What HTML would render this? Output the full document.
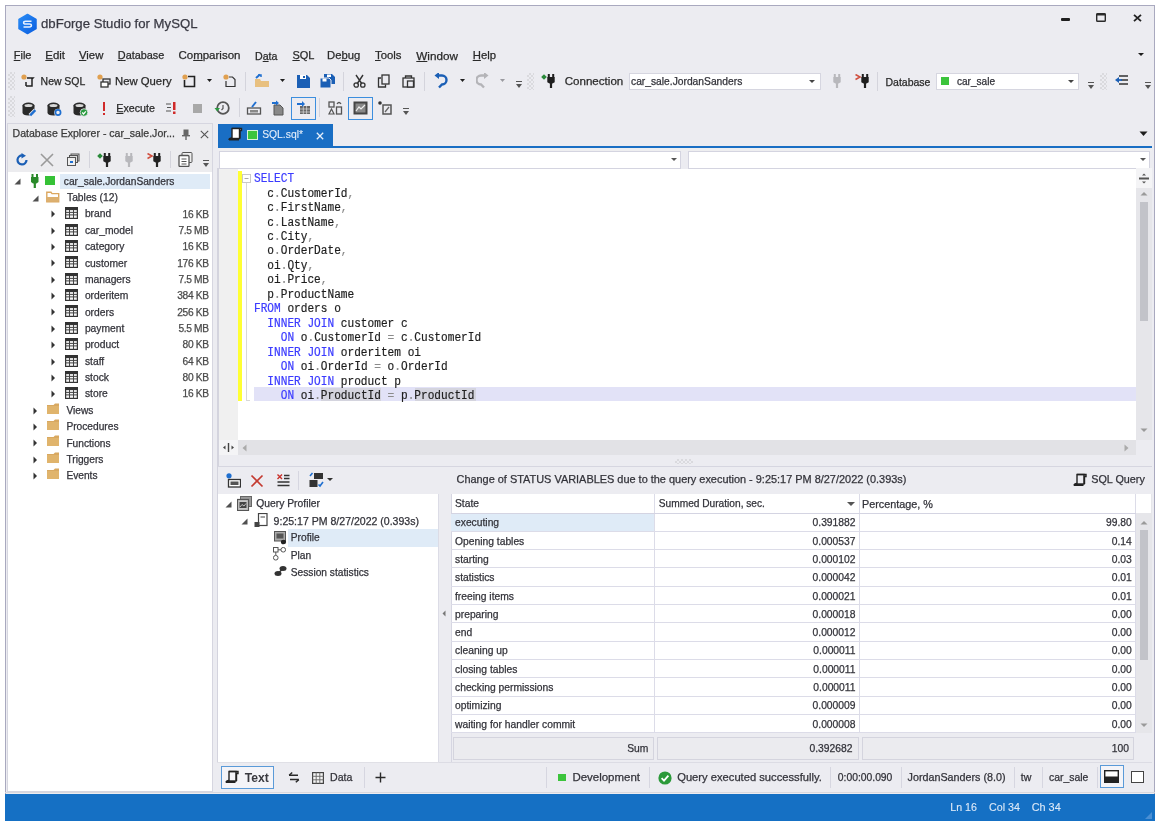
<!DOCTYPE html><html><head><meta charset="utf-8"><style>
html,body{margin:0;padding:0;}
body{width:1160px;height:828px;position:relative;overflow:hidden;background:#fff;filter:blur(0.3px);font-family:"Liberation Sans", sans-serif;}
.a{position:absolute;}
.t{white-space:nowrap;-webkit-text-stroke:0.25px currentColor;}
.ns{-webkit-text-stroke:0;}
.grip{background:repeating-conic-gradient(#dadade 0 25%, transparent 0 50%) 0 0/4px 4px;}
.m{font-family:"Liberation Mono", monospace;font-size:12px;line-height:14.45px;white-space:pre;color:#1e1e1e;-webkit-text-stroke:0.2px currentColor;transform:scaleX(0.9275);transform-origin:0 0;}
.kw{color:#3b3bff;}
.pu{color:#8c8c8c;}
u{text-decoration:underline;text-underline-offset:1px;}
</style></head><body>
<div class="a" style="left:5px;top:5px;width:1150px;height:816px;background:#ececf1;"></div>
<div class="a" style="left:5px;top:5px;width:1150px;height:1px;background:#a9a9bf;"></div>
<div class="a" style="left:5px;top:5px;width:1px;height:816px;background:#a9a9bf;"></div>
<div class="a" style="left:1154px;top:5px;width:1px;height:816px;background:#a9a9bf;"></div>
<svg class="a" style="left:17px;top:13px" width="21" height="22" viewBox="0 0 21 22"><defs><linearGradient id="lg" x1="0" y1="0" x2="1" y2="1"><stop offset="0" stop-color="#2a8cf5"/><stop offset="1" stop-color="#0a5ee0"/></linearGradient></defs><path d="M10.5 1.5L19 6.3V15.7L10.5 20.5L2 15.7V6.3Z" fill="url(#lg)" stroke="url(#lg)" stroke-width="1.5" stroke-linejoin="round"/><path d="M14.5 8.2H8.6Q6.6 8.2 6.6 9.7Q6.6 11.1 8.6 11.1H12.4Q14.4 11.1 14.4 12.6Q14.4 14 12.4 14H6.5" stroke="#e8f2ff" stroke-width="1.5" fill="none"/></svg>
<div class="a t" style="top:17.01px;font-size:13.16px;line-height:13.16px;color:#3a3a44;left:41.0px;">dbForge Studio for MySQL</div>
<div class="a" style="left:1061px;top:18px;width:9px;height:3px;background:#1e1e1e;border-radius:1px"></div>
<svg class="a" style="left:1095.5px;top:13px" width="10" height="9" viewBox="0 0 10 9"><rect x="0.7" y="0.7" width="8.6" height="7.6" rx="0.8" fill="none" stroke="#2a2a2a" stroke-width="1.4"/><rect x="0.5" y="0.5" width="9" height="2" fill="#2a2a2a"/></svg>
<svg class="a" style="left:1132.5px;top:13.5px" width="9" height="8" viewBox="0 0 9 8"><path d="M1 0.8L8 7.2M8 0.8L1 7.2" stroke="#222" stroke-width="1.8"/></svg>
<div class="a t" style="top:50.30px;font-size:11.06px;line-height:11.06px;color:#2a2a2a;left:13.7px;"><u>F</u>ile</div>
<div class="a t" style="top:50.13px;font-size:11.42px;line-height:11.42px;color:#2a2a2a;left:45.3px;"><u>E</u>dit</div>
<div class="a t" style="top:50.19px;font-size:11.3px;line-height:11.3px;color:#2a2a2a;left:79.0px;"><u>V</u>iew</div>
<div class="a t" style="top:50.40px;font-size:10.86px;line-height:10.86px;color:#2a2a2a;left:117.8px;"><u>D</u>atabase</div>
<div class="a t" style="top:50.09px;font-size:11.52px;line-height:11.52px;color:#2a2a2a;left:178.4px;">Co<u>m</u>parison</div>
<div class="a t" style="top:50.50px;font-size:10.64px;line-height:10.64px;color:#2a2a2a;left:255.0px;">D<u>a</u>ta</div>
<div class="a t" style="top:50.33px;font-size:11px;line-height:11px;color:#2a2a2a;left:292.4px;"><u>S</u>QL</div>
<div class="a t" style="top:50.20px;font-size:11.27px;line-height:11.27px;color:#2a2a2a;left:327.0px;">De<u>b</u>ug</div>
<div class="a t" style="top:50.17px;font-size:11.35px;line-height:11.35px;color:#2a2a2a;left:375.0px;"><u>T</u>ools</div>
<div class="a t" style="top:50.00px;font-size:11.71px;line-height:11.71px;color:#2a2a2a;left:416.3px;"><u>W</u>indow</div>
<div class="a t" style="top:50.17px;font-size:11.34px;line-height:11.34px;color:#2a2a2a;left:472.7px;"><u>H</u>elp</div>
<svg class="a" style="left:1138px;top:53px" width="6" height="4" viewBox="0 0 6 4"><path d="M0 0H6L3 3Z" fill="#1e1e1e"/></svg>
<div class="a grip" style="left:8px;top:72px;width:7px;height:18px"></div>
<svg class="a" style="left:21px;top:74px" width="15" height="14" viewBox="0 0 15 14"><circle cx="3" cy="3" r="2.6" fill="#e0a050"/><path d="M6 4H12L11 5V12H5" stroke="#222" stroke-width="1.5" fill="none"/><path d="M5 8V12" stroke="#222" stroke-width="1.5"/></svg>
<div class="a t" style="top:76.59px;font-size:10.44px;line-height:10.44px;color:#2a2a2a;left:40.6px;">New SQL</div>
<svg class="a" style="left:97px;top:74px" width="15" height="14" viewBox="0 0 15 14"><circle cx="3" cy="3" r="2.6" fill="#e0a050"/><rect x="6" y="5" width="7" height="5" fill="none" stroke="#333" stroke-width="1.3"/><rect x="4" y="8" width="7" height="5" fill="#fff" stroke="#333" stroke-width="1.3"/></svg>
<div class="a t" style="top:76.18px;font-size:11.32px;line-height:11.32px;color:#2a2a2a;left:115.0px;">New Query</div>
<svg class="a" style="left:182px;top:74px" width="14" height="14" viewBox="0 0 14 14"><circle cx="3" cy="3" r="2.6" fill="#e0a050"/><path d="M6 2.5H12.5V12.5H2.5V6" stroke="#222" stroke-width="1.6" fill="none"/></svg>
<svg class="a" style="left:206.5px;top:79px" width="5.0" height="4" viewBox="0 0 5.0 4"><path d="M0 0H5.0L2.5 3Z" fill="#1e1e1e"/></svg>
<svg class="a" style="left:223px;top:74px" width="13" height="14" viewBox="0 0 13 14"><circle cx="3" cy="3" r="2.6" fill="#e0a050"/><path d="M6 3H9.5L12 5.5V12.5H3V7" stroke="#333" stroke-width="1.2" fill="none"/></svg>
<div class="a" style="left:245px;top:72px;width:1px;height:19px;background:#d4d4dc;"></div>
<svg class="a" style="left:254px;top:73px" width="16" height="15" viewBox="0 0 16 15"><path d="M1 6H6L7 8H15V14H1Z" fill="#e8c080"/><path d="M2 5L6 1.5" stroke="#1f6fd0" stroke-width="2"/><path d="M4 2H7V4" stroke="#1f6fd0" stroke-width="1.5" fill="none"/></svg>
<svg class="a" style="left:280.0px;top:79px" width="5.0" height="4" viewBox="0 0 5.0 4"><path d="M0 0H5.0L2.5 3Z" fill="#1e1e1e"/></svg>
<svg class="a" style="left:297px;top:75px" width="13" height="13" viewBox="0 0 13 13"><path d="M0 0H10L13 3V13H0Z" fill="#1b5fb5"/><rect x="3" y="0" width="6" height="4" fill="#fff"/><rect x="6" y="1" width="2" height="2" fill="#1b5fb5"/></svg>
<svg class="a" style="left:320px;top:74px" width="15" height="14" viewBox="0 0 15 14"><path d="M4 0H12L15 3V10H4Z" fill="#1b5fb5"/><path d="M0 4H9L11 6V14H0Z" fill="#1b5fb5" stroke="#ececf1" stroke-width="1"/><rect x="2.5" y="4.5" width="4" height="3" fill="#fff"/><rect x="7" y="0.5" width="4" height="2.5" fill="#fff"/></svg>
<div class="a" style="left:343px;top:72px;width:1px;height:19px;background:#d4d4dc;"></div>
<svg class="a" style="left:353px;top:74px" width="13" height="14" viewBox="0 0 13 14"><path d="M3 1L9 10M10 1L4 10" stroke="#333" stroke-width="1.4"/><circle cx="3.2" cy="11" r="2.2" fill="none" stroke="#333" stroke-width="1.3"/><circle cx="9.8" cy="11" r="2.2" fill="none" stroke="#333" stroke-width="1.3"/></svg>
<svg class="a" style="left:377px;top:74px" width="14" height="14" viewBox="0 0 14 14"><rect x="5" y="1" width="7" height="9" fill="none" stroke="#333" stroke-width="1.3"/><path d="M4 4H1.5V13H8.5V10.5" fill="none" stroke="#333" stroke-width="1.3"/></svg>
<svg class="a" style="left:402px;top:74px" width="13" height="14" viewBox="0 0 13 14"><path d="M3.5 4V2H9.5V4" fill="none" stroke="#333" stroke-width="1.3"/><rect x="1" y="4" width="11" height="9" fill="none" stroke="#333" stroke-width="1.3"/><rect x="5.5" y="7" width="6" height="6" fill="#ececf1" stroke="#333" stroke-width="1.3"/></svg>
<div class="a" style="left:424px;top:72px;width:1px;height:19px;background:#d4d4dc;"></div>
<svg class="a" style="left:434px;top:73px" width="14" height="16" viewBox="0 0 14 16"><path d="M4 2.5H8A4.5 4.5 0 0 1 8 11.5L5 14.5" stroke="#1b5fb5" stroke-width="2.4" fill="none"/><path d="M0.5 2.5L5 -1V6Z" fill="#1b5fb5"/></svg>
<svg class="a" style="left:459.5px;top:79px" width="5.0" height="4" viewBox="0 0 5.0 4"><path d="M0 0H5.0L2.5 3Z" fill="#1e1e1e"/></svg>
<svg class="a" style="left:476px;top:73px" width="13" height="16" viewBox="0 0 13 16"><path d="M9 2.5H5A4.5 4.5 0 0 0 5 11.5L8 14.5" stroke="#b4b4b8" stroke-width="2.4" fill="none"/><path d="M12.5 2.5L8 -1V6Z" fill="#b4b4b8"/></svg>
<svg class="a" style="left:499.5px;top:79px" width="5.0" height="4" viewBox="0 0 5.0 4"><path d="M0 0H5.0L2.5 3Z" fill="#9a9aa0"/></svg>
<svg class="a" style="left:515px;top:79.5px" width="8" height="10" viewBox="0 0 8 10"><rect x="1" y="1" width="6" height="1" fill="#555"/><path d="M1 4H7L4 8Z" fill="#555"/></svg>
<div class="a grip" style="left:527px;top:73px;width:7px;height:17px"></div>
<svg class="a" style="left:541px;top:74px" width="14" height="15" viewBox="0 0 14 15"><rect x="6.8" y="0" width="2" height="3.5" fill="#1e1e1e"/><rect x="11.2" y="0" width="2" height="3.5" fill="#1e1e1e"/><path d="M6.3 3H13.7V8.2L11.5 9.5H8.5L6.3 8.2Z" fill="#1e1e1e"/><rect x="8.9" y="9" width="2.2" height="5" fill="#1e1e1e"/><path d="M3 0.2L5.8 3L3 5.8L0.2 3Z" fill="#2a8a3a"/></svg>
<div class="a t" style="top:76.06px;font-size:11.58px;line-height:11.58px;color:#2a2a2a;left:564.7px;">Connection</div>
<div class="a" style="left:629px;top:73px;width:192px;height:17px;background:#fff;box-sizing:border-box;border:1px solid #d6d6e0;"></div>
<div class="a t" style="top:76.67px;font-size:10.27px;line-height:10.27px;color:#33333a;left:631.0px;">car_sale.JordanSanders</div>
<svg class="a" style="left:809px;top:79.5px" width="6" height="4" viewBox="0 0 6 4"><path d="M0 0H6L3 3Z" fill="#444"/></svg>
<svg class="a" style="left:827px;top:74px" width="14" height="15" viewBox="0 0 14 15"><rect x="6.8" y="0" width="2" height="3.5" fill="#b8b8bc"/><rect x="11.2" y="0" width="2" height="3.5" fill="#b8b8bc"/><path d="M6.3 3H13.7V8.2L11.5 9.5H8.5L6.3 8.2Z" fill="#b8b8bc"/><rect x="8.9" y="9" width="2.2" height="5" fill="#b8b8bc"/></svg>
<svg class="a" style="left:855px;top:74px" width="14" height="15" viewBox="0 0 14 15"><rect x="6.8" y="0" width="2" height="3.5" fill="#1e1e1e"/><rect x="11.2" y="0" width="2" height="3.5" fill="#1e1e1e"/><path d="M6.3 3H13.7V8.2L11.5 9.5H8.5L6.3 8.2Z" fill="#1e1e1e"/><rect x="8.9" y="9" width="2.2" height="5" fill="#1e1e1e"/><path d="M0.5 0.5L5 3L0.5 5.5" stroke="#d05040" stroke-width="1.6" fill="none"/></svg>
<div class="a" style="left:877px;top:72px;width:1px;height:19px;background:#d4d4dc;"></div>
<div class="a t" style="top:76.56px;font-size:10.51px;line-height:10.51px;color:#2a2a2a;left:885.5px;">Database</div>
<div class="a" style="left:936px;top:73px;width:143px;height:17px;background:#fff;box-sizing:border-box;border:1px solid #d6d6e0;"></div>
<div class="a" style="left:941px;top:77px;width:8px;height:8px;background:#3cc43c;"></div>
<div class="a t" style="top:76.78px;font-size:10.05px;line-height:10.05px;color:#33333a;left:957.0px;">car_sale</div>
<svg class="a" style="left:1068px;top:79.5px" width="6" height="4" viewBox="0 0 6 4"><path d="M0 0H6L3 3Z" fill="#444"/></svg>
<svg class="a" style="left:1087px;top:80.5px" width="8" height="10" viewBox="0 0 8 10"><rect x="1" y="1" width="6" height="1" fill="#555"/><path d="M1 4H7L4 8Z" fill="#555"/></svg>
<div class="a grip" style="left:1100px;top:73px;width:7px;height:17px"></div>
<svg class="a" style="left:1114px;top:74px" width="15" height="14" viewBox="0 0 15 14"><path d="M5 2H14M7 6H14M5 10H14" stroke="#333" stroke-width="1.4"/><path d="M1 6L5 3V9Z" fill="#1b5fb5"/><path d="M4 6H8" stroke="#1b5fb5" stroke-width="1.8"/></svg>
<svg class="a" style="left:1143.5px;top:80.5px" width="8" height="10" viewBox="0 0 8 10"><rect x="1" y="1" width="6" height="1" fill="#555"/><path d="M1 4H7L4 8Z" fill="#555"/></svg>
<div class="a grip" style="left:8px;top:96px;width:7px;height:21px"></div>
<svg class="a" style="left:22px;top:101.5px" width="15" height="15" viewBox="0 0 15 15"><path d="M0.5 3.5V10.5Q0.5 13.5 6.5 13.5Q12.5 13.5 12.5 10.5V3.5Z" fill="#2a2a2a"/><ellipse cx="6.5" cy="3.5" rx="6" ry="3" fill="#2a2a2a"/><ellipse cx="6.5" cy="3.6" rx="4" ry="1.5" fill="#d8d8d8"/><path d="M8 13.5L13.5 8" stroke="#ececf1" stroke-width="4"/><path d="M8.2 13.3L13.3 8.2" stroke="#1f6fd0" stroke-width="2.4"/></svg>
<svg class="a" style="left:47px;top:101.5px" width="15" height="15" viewBox="0 0 15 15"><path d="M0.5 3.5V10.5Q0.5 13.5 6.5 13.5Q12.5 13.5 12.5 10.5V3.5Z" fill="#2a2a2a"/><ellipse cx="6.5" cy="3.5" rx="6" ry="3" fill="#2a2a2a"/><ellipse cx="6.5" cy="3.6" rx="4" ry="1.5" fill="#d8d8d8"/><circle cx="11" cy="10.5" r="3.8" fill="#ececf1"/><circle cx="11" cy="10.5" r="2.6" fill="none" stroke="#1f6fd0" stroke-width="1.7"/></svg>
<svg class="a" style="left:72.5px;top:101.5px" width="15" height="15" viewBox="0 0 15 15"><path d="M0.5 3.5V10.5Q0.5 13.5 6.5 13.5Q12.5 13.5 12.5 10.5V3.5Z" fill="#2a2a2a"/><ellipse cx="6.5" cy="3.5" rx="6" ry="3" fill="#2a2a2a"/><ellipse cx="6.5" cy="3.6" rx="4" ry="1.5" fill="#d8d8d8"/><circle cx="11" cy="10.5" r="3.8" fill="#2a9a40" stroke="#ececf1" stroke-width="0.8"/><path d="M9.2 10.5L10.6 12L12.8 9.3" stroke="#fff" stroke-width="1.2" fill="none"/></svg>
<div class="a" style="left:102.5px;top:102px;width:2.5px;height:9px;background:#d02a2a;"></div>
<div class="a" style="left:102.5px;top:112.5px;width:2.5px;height:2.5px;background:#d02a2a;"></div>
<div class="a t" style="top:103.47px;font-size:10.71px;line-height:10.71px;color:#2a2a2a;left:116.3px;"><u>E</u>xecute</div>
<svg class="a" style="left:166px;top:101px" width="11" height="14" viewBox="0 0 11 14"><path d="M0 3H5M1 6.5H5M0 10H5" stroke="#555" stroke-width="1.2"/><rect x="7" y="1" width="2.5" height="8" fill="#d02a2a"/><rect x="7" y="10.5" width="2.5" height="2.5" fill="#d02a2a"/></svg>
<div class="a" style="left:193px;top:104px;width:9px;height:9px;background:#a8a8a8;"></div>
<svg class="a" style="left:214px;top:100px" width="16" height="16" viewBox="0 0 16 16"><circle cx="9" cy="8" r="5.8" fill="none" stroke="#555" stroke-width="1.8"/><path d="M0.5 8H6L3.2 11.5Z" fill="#2a9a40"/><path d="M9 5V8.5L7.5 10" stroke="#555" stroke-width="1.2" fill="none"/></svg>
<div class="a" style="left:239px;top:98px;width:1px;height:19px;background:#d4d4dc;"></div>
<svg class="a" style="left:246px;top:100px" width="16" height="16" viewBox="0 0 16 16"><rect x="1.5" y="8" width="13" height="6" fill="none" stroke="#555" stroke-width="1.3"/><rect x="4" y="10" width="8" height="2.5" fill="#888"/><path d="M6 7L10 2" stroke="#1f6fd0" stroke-width="2"/></svg>
<svg class="a" style="left:271px;top:100px" width="15" height="16" viewBox="0 0 15 16"><path d="M3 5H9L12 8V15H3Z" fill="#888" stroke="#555"/><path d="M1 3H6" stroke="#1f6fd0" stroke-width="2"/><path d="M5 0.5L8 3L5 5.5Z" fill="#1f6fd0"/></svg>
<div class="a" style="left:291px;top:97px;width:25px;height:23px;box-sizing:border-box;border:1px solid #3c8ede;"></div>
<svg class="a" style="left:296px;top:100px" width="16" height="16" viewBox="0 0 16 16"><rect x="4" y="6" width="10" height="8" fill="#666"/><path d="M4 9H14M4 12H14M7.3 6V14M10.6 6V14" stroke="#ddd" stroke-width="0.7"/><path d="M1 4H7" stroke="#1f6fd0" stroke-width="2"/><path d="M6 1L9 4L6 7Z" fill="#1f6fd0"/></svg>
<div class="a" style="left:319px;top:98px;width:1px;height:19px;background:#d4d4dc;"></div>
<svg class="a" style="left:328px;top:100px" width="15" height="16" viewBox="0 0 15 16"><rect x="1" y="2" width="5" height="5" fill="none" stroke="#555" stroke-width="1.3"/><path d="M3.5 9L1 14H6Z" fill="none" stroke="#555" stroke-width="1.2"/><rect x="8.5" y="7" width="5" height="7" fill="none" stroke="#555" stroke-width="1.3"/><path d="M9 4Q11 1 13 4" stroke="#555" stroke-width="1.3" fill="none"/></svg>
<div class="a" style="left:348px;top:97px;width:25px;height:23px;box-sizing:border-box;border:1px solid #3c8ede;"></div>
<svg class="a" style="left:353px;top:101px" width="15" height="14" viewBox="0 0 15 14"><rect x="0.5" y="0.5" width="14" height="13" fill="#444"/><rect x="2.5" y="2.5" width="10" height="9" fill="#888"/><path d="M3 10L6 6L8 8L12 4" stroke="#eee" stroke-width="1.2" fill="none"/></svg>
<svg class="a" style="left:377px;top:100px" width="16" height="16" viewBox="0 0 16 16"><rect x="6" y="5" width="8" height="9" fill="none" stroke="#555" stroke-width="1.5"/><path d="M8 12L12 7" stroke="#666" stroke-width="1.3"/><circle cx="3" cy="3" r="1.8" fill="#333"/></svg>
<svg class="a" style="left:402px;top:106.5px" width="8" height="10" viewBox="0 0 8 10"><rect x="1" y="1" width="6" height="1" fill="#555"/><path d="M1 4H7L4 8Z" fill="#555"/></svg>
<div class="a" style="left:7px;top:123px;width:206px;height:669px;background:#ececef;box-sizing:border-box;border:1px solid #d6d6e0;"></div>
<div class="a t" style="top:128.44px;font-size:10.56px;line-height:10.56px;color:#3a3a3a;left:12.6px;">Database Explorer - car_sale.Jor...</div>
<svg class="a" style="left:182px;top:129px" width="8" height="11" viewBox="0 0 8 11"><rect x="1.5" y="0.5" width="5" height="6" fill="#666"/><rect x="0" y="6" width="8" height="1.4" fill="#666"/><rect x="3.3" y="7" width="1.4" height="4" fill="#666"/></svg>
<svg class="a" style="left:199.5px;top:130px" width="9" height="9" viewBox="0 0 9 9"><path d="M0.8 0.8L8.2 8.2M8.2 0.8L0.8 8.2" stroke="#555" stroke-width="1.1"/></svg>
<svg class="a" style="left:16px;top:153px" width="13" height="14" viewBox="0 0 13 14"><path d="M10.5 7A4.5 4.5 0 1 1 6.5 2.5" stroke="#1b5fb5" stroke-width="2.2" fill="none"/><path d="M5.5 0L10 2.8L5.5 5.5Z" fill="#1b5fb5"/></svg>
<svg class="a" style="left:40px;top:153px" width="14" height="14" viewBox="0 0 14 14"><path d="M1 1L13 13M13 1L1 13" stroke="#9a9a9a" stroke-width="1.6"/></svg>
<svg class="a" style="left:67px;top:153px" width="13" height="13" viewBox="0 0 13 13"><rect x="4" y="1" width="8" height="7" fill="#ddd" stroke="#555"/><rect x="2.5" y="2.5" width="8" height="7" fill="#ddd" stroke="#555"/><rect x="0.5" y="4.5" width="8" height="8" fill="#eee" stroke="#555"/><rect x="3" y="8" width="3" height="2" fill="#1f6fd0"/></svg>
<div class="a" style="left:88.5px;top:151px;width:1.0px;height:17px;background:#d4d4dc;"></div>
<svg class="a" style="left:97px;top:152.5px" width="14" height="15" viewBox="0 0 14 15"><rect x="6.8" y="0" width="2" height="3.5" fill="#222"/><rect x="11.2" y="0" width="2" height="3.5" fill="#222"/><path d="M6.3 3H13.7V8.2L11.5 9.5H8.5L6.3 8.2Z" fill="#222"/><rect x="8.9" y="9" width="2.2" height="5" fill="#222"/><path d="M3 0.2L5.8 3L3 5.8L0.2 3Z" fill="#2a8a3a"/></svg>
<svg class="a" style="left:119px;top:153px" width="14" height="15" viewBox="0 0 14 15"><rect x="6.8" y="0" width="2" height="3.5" fill="#b8b8bc"/><rect x="11.2" y="0" width="2" height="3.5" fill="#b8b8bc"/><path d="M6.3 3H13.7V8.2L11.5 9.5H8.5L6.3 8.2Z" fill="#b8b8bc"/><rect x="8.9" y="9" width="2.2" height="5" fill="#b8b8bc"/></svg>
<svg class="a" style="left:147px;top:152.5px" width="14" height="15" viewBox="0 0 14 15"><rect x="6.8" y="0" width="2" height="3.5" fill="#222"/><rect x="11.2" y="0" width="2" height="3.5" fill="#222"/><path d="M6.3 3H13.7V8.2L11.5 9.5H8.5L6.3 8.2Z" fill="#222"/><rect x="8.9" y="9" width="2.2" height="5" fill="#222"/><path d="M0.5 0.5L5 3L0.5 5.5" stroke="#d05040" stroke-width="1.6" fill="none"/></svg>
<div class="a" style="left:169.5px;top:151px;width:1.0px;height:17px;background:#d4d4dc;"></div>
<svg class="a" style="left:178px;top:152px" width="15" height="15" viewBox="0 0 15 15"><rect x="4" y="0.5" width="10" height="10" rx="1" fill="#eee" stroke="#555"/><rect x="1" y="3.5" width="10" height="11" rx="1" fill="#fff" stroke="#555" stroke-width="1.3"/><path d="M3.5 7H8.5M3.5 9.5H8.5M3.5 12H8.5" stroke="#555" stroke-width="1"/></svg>
<svg class="a" style="left:202px;top:158.5px" width="8" height="10" viewBox="0 0 8 10"><rect x="1" y="1" width="6" height="1" fill="#555"/><path d="M1 4H7L4 8Z" fill="#555"/></svg>
<div class="a" style="left:8px;top:172px;width:204px;height:619px;background:#ffffff;"></div>
<div class="a" style="left:59.5px;top:173.5px;width:150.0px;height:15.0px;background:#dfebf7;"></div>
<svg class="a" style="left:13.5px;top:178px" width="7" height="7" viewBox="0 0 7 7"><path d="M6.5 0.5V6.5H0.5Z" fill="#505050"/></svg>
<svg class="a" style="left:30.5px;top:174px" width="8" height="14" viewBox="0 0 8 14"><rect x="0.5" y="0" width="2" height="3.5" fill="#2a8a2a"/><rect x="5" y="0" width="2" height="3.5" fill="#2a8a2a"/><path d="M0 3H7.5V8L5.5 9.5H2L0 8Z" fill="#2a8a2a"/><rect x="2.7" y="9" width="2.2" height="5" fill="#2a8a2a"/></svg>
<div class="a" style="left:45.2px;top:176.2px;width:9.5px;height:9.300000000000011px;background:#36c236;"></div>
<div class="a t" style="top:176.80px;font-size:10.21px;line-height:10.21px;color:#33333a;left:63.8px;">car_sale.JordanSanders</div>
<svg class="a" style="left:32px;top:194.5px" width="7" height="7" viewBox="0 0 7 7"><path d="M6.5 0.5V6.5H0.5Z" fill="#505050"/></svg>
<svg class="a" style="left:46px;top:190.5px" width="14" height="12" viewBox="0 0 14 12"><path d="M0.8 1.3H5L6 2.6H12.7V10.7H0.8Z" fill="#fff" stroke="#dca860" stroke-width="1.4"/><path d="M0.8 6H12.7V10.7H0.8Z" fill="#dcb070"/></svg>
<div class="a t" style="top:193.11px;font-size:10.31px;line-height:10.31px;color:#33333a;left:67.0px;">Tables (12)</div>
<svg class="a" style="left:50.5px;top:210.32px" width="5" height="8" viewBox="0 0 5 8"><path d="M0.5 0.5L4 4L0.5 7.5Z" fill="#333"/></svg>
<svg class="a" style="left:65px;top:207.32px" width="13" height="12" viewBox="0 0 13 12"><rect x="0.6" y="0.6" width="11.8" height="10.8" fill="#f4f4f4" stroke="#333" stroke-width="1.2"/><rect x="0.5" y="0.5" width="12" height="2.6" fill="#333"/><path d="M0.5 5.4H12.5M0.5 7.9H12.5M4.5 3V11.5M8.5 3V11.5" stroke="#444" stroke-width="1"/></svg>
<div class="a t" style="top:209.48px;font-size:10.3px;line-height:10.3px;color:#33333a;left:84.9px;">brand</div>
<div class="a t" style="top:209.53px;font-size:10.2px;line-height:10.2px;color:#4a4a4a;right:951.4px;text-align:right;letter-spacing:-0.35px;">16 KB</div>
<svg class="a" style="left:50.5px;top:226.68px" width="5" height="8" viewBox="0 0 5 8"><path d="M0.5 0.5L4 4L0.5 7.5Z" fill="#333"/></svg>
<svg class="a" style="left:65px;top:223.68px" width="13" height="12" viewBox="0 0 13 12"><rect x="0.6" y="0.6" width="11.8" height="10.8" fill="#f4f4f4" stroke="#333" stroke-width="1.2"/><rect x="0.5" y="0.5" width="12" height="2.6" fill="#333"/><path d="M0.5 5.4H12.5M0.5 7.9H12.5M4.5 3V11.5M8.5 3V11.5" stroke="#444" stroke-width="1"/></svg>
<div class="a t" style="top:225.84px;font-size:10.3px;line-height:10.3px;color:#33333a;left:84.9px;">car_model</div>
<div class="a t" style="top:225.89px;font-size:10.2px;line-height:10.2px;color:#4a4a4a;right:951.4px;text-align:right;letter-spacing:-0.35px;">7.5 MB</div>
<svg class="a" style="left:50.5px;top:243.04px" width="5" height="8" viewBox="0 0 5 8"><path d="M0.5 0.5L4 4L0.5 7.5Z" fill="#333"/></svg>
<svg class="a" style="left:65px;top:240.04px" width="13" height="12" viewBox="0 0 13 12"><rect x="0.6" y="0.6" width="11.8" height="10.8" fill="#f4f4f4" stroke="#333" stroke-width="1.2"/><rect x="0.5" y="0.5" width="12" height="2.6" fill="#333"/><path d="M0.5 5.4H12.5M0.5 7.9H12.5M4.5 3V11.5M8.5 3V11.5" stroke="#444" stroke-width="1"/></svg>
<div class="a t" style="top:242.20px;font-size:10.3px;line-height:10.3px;color:#33333a;left:84.9px;">category</div>
<div class="a t" style="top:242.25px;font-size:10.2px;line-height:10.2px;color:#4a4a4a;right:951.4px;text-align:right;letter-spacing:-0.35px;">16 KB</div>
<svg class="a" style="left:50.5px;top:259.4px" width="5" height="8" viewBox="0 0 5 8"><path d="M0.5 0.5L4 4L0.5 7.5Z" fill="#333"/></svg>
<svg class="a" style="left:65px;top:256.4px" width="13" height="12" viewBox="0 0 13 12"><rect x="0.6" y="0.6" width="11.8" height="10.8" fill="#f4f4f4" stroke="#333" stroke-width="1.2"/><rect x="0.5" y="0.5" width="12" height="2.6" fill="#333"/><path d="M0.5 5.4H12.5M0.5 7.9H12.5M4.5 3V11.5M8.5 3V11.5" stroke="#444" stroke-width="1"/></svg>
<div class="a t" style="top:258.56px;font-size:10.3px;line-height:10.3px;color:#33333a;left:84.9px;">customer</div>
<div class="a t" style="top:258.61px;font-size:10.2px;line-height:10.2px;color:#4a4a4a;right:951.4px;text-align:right;letter-spacing:-0.35px;">176 KB</div>
<svg class="a" style="left:50.5px;top:275.76px" width="5" height="8" viewBox="0 0 5 8"><path d="M0.5 0.5L4 4L0.5 7.5Z" fill="#333"/></svg>
<svg class="a" style="left:65px;top:272.76px" width="13" height="12" viewBox="0 0 13 12"><rect x="0.6" y="0.6" width="11.8" height="10.8" fill="#f4f4f4" stroke="#333" stroke-width="1.2"/><rect x="0.5" y="0.5" width="12" height="2.6" fill="#333"/><path d="M0.5 5.4H12.5M0.5 7.9H12.5M4.5 3V11.5M8.5 3V11.5" stroke="#444" stroke-width="1"/></svg>
<div class="a t" style="top:274.92px;font-size:10.3px;line-height:10.3px;color:#33333a;left:84.9px;">managers</div>
<div class="a t" style="top:274.97px;font-size:10.2px;line-height:10.2px;color:#4a4a4a;right:951.4px;text-align:right;letter-spacing:-0.35px;">7.5 MB</div>
<svg class="a" style="left:50.5px;top:292.12px" width="5" height="8" viewBox="0 0 5 8"><path d="M0.5 0.5L4 4L0.5 7.5Z" fill="#333"/></svg>
<svg class="a" style="left:65px;top:289.12px" width="13" height="12" viewBox="0 0 13 12"><rect x="0.6" y="0.6" width="11.8" height="10.8" fill="#f4f4f4" stroke="#333" stroke-width="1.2"/><rect x="0.5" y="0.5" width="12" height="2.6" fill="#333"/><path d="M0.5 5.4H12.5M0.5 7.9H12.5M4.5 3V11.5M8.5 3V11.5" stroke="#444" stroke-width="1"/></svg>
<div class="a t" style="top:291.28px;font-size:10.3px;line-height:10.3px;color:#33333a;left:84.9px;">orderitem</div>
<div class="a t" style="top:291.33px;font-size:10.2px;line-height:10.2px;color:#4a4a4a;right:951.4px;text-align:right;letter-spacing:-0.35px;">384 KB</div>
<svg class="a" style="left:50.5px;top:308.48px" width="5" height="8" viewBox="0 0 5 8"><path d="M0.5 0.5L4 4L0.5 7.5Z" fill="#333"/></svg>
<svg class="a" style="left:65px;top:305.48px" width="13" height="12" viewBox="0 0 13 12"><rect x="0.6" y="0.6" width="11.8" height="10.8" fill="#f4f4f4" stroke="#333" stroke-width="1.2"/><rect x="0.5" y="0.5" width="12" height="2.6" fill="#333"/><path d="M0.5 5.4H12.5M0.5 7.9H12.5M4.5 3V11.5M8.5 3V11.5" stroke="#444" stroke-width="1"/></svg>
<div class="a t" style="top:307.64px;font-size:10.3px;line-height:10.3px;color:#33333a;left:84.9px;">orders</div>
<div class="a t" style="top:307.69px;font-size:10.2px;line-height:10.2px;color:#4a4a4a;right:951.4px;text-align:right;letter-spacing:-0.35px;">256 KB</div>
<svg class="a" style="left:50.5px;top:324.84000000000003px" width="5" height="8" viewBox="0 0 5 8"><path d="M0.5 0.5L4 4L0.5 7.5Z" fill="#333"/></svg>
<svg class="a" style="left:65px;top:321.84000000000003px" width="13" height="12" viewBox="0 0 13 12"><rect x="0.6" y="0.6" width="11.8" height="10.8" fill="#f4f4f4" stroke="#333" stroke-width="1.2"/><rect x="0.5" y="0.5" width="12" height="2.6" fill="#333"/><path d="M0.5 5.4H12.5M0.5 7.9H12.5M4.5 3V11.5M8.5 3V11.5" stroke="#444" stroke-width="1"/></svg>
<div class="a t" style="top:324.00px;font-size:10.3px;line-height:10.3px;color:#33333a;left:84.9px;">payment</div>
<div class="a t" style="top:324.05px;font-size:10.2px;line-height:10.2px;color:#4a4a4a;right:951.4px;text-align:right;letter-spacing:-0.35px;">5.5 MB</div>
<svg class="a" style="left:50.5px;top:341.2px" width="5" height="8" viewBox="0 0 5 8"><path d="M0.5 0.5L4 4L0.5 7.5Z" fill="#333"/></svg>
<svg class="a" style="left:65px;top:338.2px" width="13" height="12" viewBox="0 0 13 12"><rect x="0.6" y="0.6" width="11.8" height="10.8" fill="#f4f4f4" stroke="#333" stroke-width="1.2"/><rect x="0.5" y="0.5" width="12" height="2.6" fill="#333"/><path d="M0.5 5.4H12.5M0.5 7.9H12.5M4.5 3V11.5M8.5 3V11.5" stroke="#444" stroke-width="1"/></svg>
<div class="a t" style="top:340.36px;font-size:10.3px;line-height:10.3px;color:#33333a;left:84.9px;">product</div>
<div class="a t" style="top:340.41px;font-size:10.2px;line-height:10.2px;color:#4a4a4a;right:951.4px;text-align:right;letter-spacing:-0.35px;">80 KB</div>
<svg class="a" style="left:50.5px;top:357.55999999999995px" width="5" height="8" viewBox="0 0 5 8"><path d="M0.5 0.5L4 4L0.5 7.5Z" fill="#333"/></svg>
<svg class="a" style="left:65px;top:354.55999999999995px" width="13" height="12" viewBox="0 0 13 12"><rect x="0.6" y="0.6" width="11.8" height="10.8" fill="#f4f4f4" stroke="#333" stroke-width="1.2"/><rect x="0.5" y="0.5" width="12" height="2.6" fill="#333"/><path d="M0.5 5.4H12.5M0.5 7.9H12.5M4.5 3V11.5M8.5 3V11.5" stroke="#444" stroke-width="1"/></svg>
<div class="a t" style="top:356.72px;font-size:10.3px;line-height:10.3px;color:#33333a;left:84.9px;">staff</div>
<div class="a t" style="top:356.77px;font-size:10.2px;line-height:10.2px;color:#4a4a4a;right:951.4px;text-align:right;letter-spacing:-0.35px;">64 KB</div>
<svg class="a" style="left:50.5px;top:373.91999999999996px" width="5" height="8" viewBox="0 0 5 8"><path d="M0.5 0.5L4 4L0.5 7.5Z" fill="#333"/></svg>
<svg class="a" style="left:65px;top:370.91999999999996px" width="13" height="12" viewBox="0 0 13 12"><rect x="0.6" y="0.6" width="11.8" height="10.8" fill="#f4f4f4" stroke="#333" stroke-width="1.2"/><rect x="0.5" y="0.5" width="12" height="2.6" fill="#333"/><path d="M0.5 5.4H12.5M0.5 7.9H12.5M4.5 3V11.5M8.5 3V11.5" stroke="#444" stroke-width="1"/></svg>
<div class="a t" style="top:373.08px;font-size:10.3px;line-height:10.3px;color:#33333a;left:84.9px;">stock</div>
<div class="a t" style="top:373.13px;font-size:10.2px;line-height:10.2px;color:#4a4a4a;right:951.4px;text-align:right;letter-spacing:-0.35px;">80 KB</div>
<svg class="a" style="left:50.5px;top:390.28px" width="5" height="8" viewBox="0 0 5 8"><path d="M0.5 0.5L4 4L0.5 7.5Z" fill="#333"/></svg>
<svg class="a" style="left:65px;top:387.28px" width="13" height="12" viewBox="0 0 13 12"><rect x="0.6" y="0.6" width="11.8" height="10.8" fill="#f4f4f4" stroke="#333" stroke-width="1.2"/><rect x="0.5" y="0.5" width="12" height="2.6" fill="#333"/><path d="M0.5 5.4H12.5M0.5 7.9H12.5M4.5 3V11.5M8.5 3V11.5" stroke="#444" stroke-width="1"/></svg>
<div class="a t" style="top:389.44px;font-size:10.3px;line-height:10.3px;color:#33333a;left:84.9px;">store</div>
<div class="a t" style="top:389.49px;font-size:10.2px;line-height:10.2px;color:#4a4a4a;right:951.4px;text-align:right;letter-spacing:-0.35px;">16 KB</div>
<svg class="a" style="left:33px;top:406.64px" width="5" height="8" viewBox="0 0 5 8"><path d="M0.5 0.5L4 4L0.5 7.5Z" fill="#333"/></svg>
<svg class="a" style="left:46.8px;top:402.64px" width="12" height="11" viewBox="0 0 12 11"><path d="M0 2H6.5L8 0.5H12V11H0Z" fill="#d8a860"/><rect x="0" y="3" width="12" height="8" fill="#e0b46c"/></svg>
<div class="a t" style="top:405.85px;font-size:10.2px;line-height:10.2px;color:#33333a;left:66.4px;">Views</div>
<svg class="a" style="left:33px;top:423.0px" width="5" height="8" viewBox="0 0 5 8"><path d="M0.5 0.5L4 4L0.5 7.5Z" fill="#333"/></svg>
<svg class="a" style="left:46.8px;top:419.0px" width="12" height="11" viewBox="0 0 12 11"><path d="M0 2H6.5L8 0.5H12V11H0Z" fill="#d8a860"/><rect x="0" y="3" width="12" height="8" fill="#e0b46c"/></svg>
<div class="a t" style="top:422.21px;font-size:10.2px;line-height:10.2px;color:#33333a;left:66.4px;">Procedures</div>
<svg class="a" style="left:33px;top:439.36px" width="5" height="8" viewBox="0 0 5 8"><path d="M0.5 0.5L4 4L0.5 7.5Z" fill="#333"/></svg>
<svg class="a" style="left:46.8px;top:435.36px" width="12" height="11" viewBox="0 0 12 11"><path d="M0 2H6.5L8 0.5H12V11H0Z" fill="#d8a860"/><rect x="0" y="3" width="12" height="8" fill="#e0b46c"/></svg>
<div class="a t" style="top:438.57px;font-size:10.2px;line-height:10.2px;color:#33333a;left:66.4px;">Functions</div>
<svg class="a" style="left:33px;top:455.72px" width="5" height="8" viewBox="0 0 5 8"><path d="M0.5 0.5L4 4L0.5 7.5Z" fill="#333"/></svg>
<svg class="a" style="left:46.8px;top:451.72px" width="12" height="11" viewBox="0 0 12 11"><path d="M0 2H6.5L8 0.5H12V11H0Z" fill="#d8a860"/><rect x="0" y="3" width="12" height="8" fill="#e0b46c"/></svg>
<div class="a t" style="top:454.93px;font-size:10.2px;line-height:10.2px;color:#33333a;left:66.4px;">Triggers</div>
<svg class="a" style="left:33px;top:472.08000000000004px" width="5" height="8" viewBox="0 0 5 8"><path d="M0.5 0.5L4 4L0.5 7.5Z" fill="#333"/></svg>
<svg class="a" style="left:46.8px;top:468.08000000000004px" width="12" height="11" viewBox="0 0 12 11"><path d="M0 2H6.5L8 0.5H12V11H0Z" fill="#d8a860"/><rect x="0" y="3" width="12" height="8" fill="#e0b46c"/></svg>
<div class="a t" style="top:471.29px;font-size:10.2px;line-height:10.2px;color:#33333a;left:66.4px;">Events</div>
<div class="a" style="left:217.5px;top:123.6px;width:115.10000000000002px;height:22.400000000000006px;background:#196ec4;"></div>
<div class="a" style="left:218px;top:146px;width:934px;height:2px;background:#196ec4;"></div>
<div class="a" style="left:218px;top:148px;width:934px;height:3px;background:#eeeef0;"></div>
<svg class="a" style="left:228px;top:127px" width="15" height="15" viewBox="0 0 15 15"><path d="M4 1.5H13.5V3.5H12V11.5" stroke="#222" stroke-width="1.4" fill="#fff"/><rect x="4" y="1.5" width="7.5" height="10" fill="#fff" stroke="#222" stroke-width="1.4"/><path d="M1 12.5H11" stroke="#222" stroke-width="2"/><path d="M4 11Q1 11 1 13" stroke="#222" stroke-width="1.4" fill="none"/></svg>
<div class="a" style="left:247px;top:130.3px;width:11px;height:10.199999999999989px;background:#3cc43c;box-sizing:border-box;border:1px solid #d8f0d8;"></div>
<div class="a t" style="top:130.14px;font-size:10.34px;line-height:10.34px;color:#e4eefa;left:262.2px;-webkit-text-stroke:0.1px #e4eefa;">SQL.sql*</div>
<svg class="a" style="left:315.5px;top:131.5px" width="8" height="8" viewBox="0 0 8 8"><path d="M0.8 0.8L7.2 7.2M7.2 0.8L0.8 7.2" stroke="#e4eefa" stroke-width="1.3"/></svg>
<svg class="a" style="left:1139px;top:131px" width="9" height="6" viewBox="0 0 9 6"><path d="M0.5 0.5H8.5L4.5 5Z" fill="#1e1e1e"/></svg>
<div class="a" style="left:218px;top:151px;width:934px;height:18px;background:#ececf1;"></div>
<div class="a" style="left:219px;top:151px;width:462px;height:18px;background:#fff;box-sizing:border-box;border:1px solid #d4d4e0;"></div>
<div class="a" style="left:688px;top:151px;width:462px;height:18px;background:#fff;box-sizing:border-box;border:1px solid #d4d4e0;"></div>
<svg class="a" style="left:671px;top:157.5px" width="6" height="4" viewBox="0 0 6 4"><path d="M0 0H6L3 3Z" fill="#555"/></svg>
<svg class="a" style="left:1140px;top:157.5px" width="6" height="4" viewBox="0 0 6 4"><path d="M0 0H6L3 3Z" fill="#555"/></svg>
<div class="a" style="left:218px;top:169px;width:934px;height:287px;background:#ffffff;"></div>
<div class="a" style="left:217px;top:168px;width:1.5px;height:594px;background:#d4d4de;"></div>
<div class="a" style="left:219px;top:169px;width:18.5px;height:270.5px;background:#f0f0f0;"></div>
<div class="a" style="left:237.5px;top:170.8px;width:4.199999999999989px;height:230.7px;background:#ffff33;"></div>
<svg class="a" style="left:242px;top:173.5px" width="9" height="9" viewBox="0 0 9 9"><rect x="0.5" y="0.5" width="8" height="8" fill="#fff" stroke="#c8c8c8"/><path d="M2.5 4.5H6.5" stroke="#aaa"/></svg>
<div class="a" style="left:245.5px;top:182.5px;width:1.0px;height:218.5px;background:#d8d8d8;"></div>
<div class="a" style="left:245.5px;top:400px;width:4.5px;height:1px;background:#d8d8d8;"></div>
<div class="a" style="left:253.8px;top:387.4px;width:882.2px;height:14.100000000000023px;background:#e2e2f7;"></div>
<div class="a" style="left:321px;top:387.6px;width:60.39999999999998px;height:13.699999999999989px;background:#d4d4de;"></div>
<div class="a" style="left:415.2px;top:387.6px;width:60.5px;height:13.699999999999989px;background:#d4d4de;"></div>
<div class="a m" style="left:254.1px;top:172.2px"><span class="kw">SELECT</span>
  c<span class="pu">.</span>CustomerId<span class="pu">,</span>
  c<span class="pu">.</span>FirstName<span class="pu">,</span>
  c<span class="pu">.</span>LastName<span class="pu">,</span>
  c<span class="pu">.</span>City<span class="pu">,</span>
  o<span class="pu">.</span>OrderDate<span class="pu">,</span>
  oi<span class="pu">.</span>Qty<span class="pu">,</span>
  oi<span class="pu">.</span>Price<span class="pu">,</span>
  p<span class="pu">.</span>ProductName
<span class="kw">FROM</span> orders o
  <span class="kw">INNER JOIN</span> customer c
    <span class="kw">ON</span> o<span class="pu">.</span>CustomerId <span class="pu">=</span> c<span class="pu">.</span>CustomerId
  <span class="kw">INNER JOIN</span> orderitem oi
    <span class="kw">ON</span> oi<span class="pu">.</span>OrderId <span class="pu">=</span> o<span class="pu">.</span>OrderId
  <span class="kw">INNER JOIN</span> product p
    <span class="kw">ON</span> oi<span class="pu">.</span>ProductId <span class="pu">=</span> p<span class="pu">.</span>ProductId</div>
<div class="a" style="left:1136px;top:168px;width:16px;height:271.5px;background:#e6e6ea;"></div>
<div class="a" style="left:1136px;top:168px;width:16px;height:20px;background:#f4f4f6;"></div>
<svg class="a" style="left:1139px;top:172px" width="10" height="13" viewBox="0 0 10 13"><path d="M3 3.5H7L5 1.5Z" fill="#555"/><rect x="0" y="5.5" width="10" height="2" fill="#555"/><path d="M3 9.5H7L5 11.5Z" fill="#555"/></svg>
<svg class="a" style="left:1140px;top:191px" width="8" height="5" viewBox="0 0 8 5"><path d="M0.5 4.5H7.5L4 1Z" fill="#9a9a9a"/></svg>
<div class="a" style="left:1139.5px;top:201.5px;width:8.200000000000045px;height:119.0px;background:#c2c3c9;"></div>
<svg class="a" style="left:1140px;top:428px" width="8" height="5" viewBox="0 0 8 5"><path d="M0.5 0.5H7.5L4 4Z" fill="#9a9a9a"/></svg>
<div class="a" style="left:219px;top:439.5px;width:917px;height:15.5px;background:#e2e2e6;"></div>
<div class="a" style="left:219px;top:439.5px;width:18.5px;height:15.5px;background:#f4f4f6;"></div>
<svg class="a" style="left:223px;top:443px" width="11" height="9" viewBox="0 0 11 9"><rect x="4.8" y="0" width="1.4" height="9" fill="#444"/><path d="M0 4.5L2.5 2.5V6.5Z" fill="#444"/><path d="M11 4.5L8.5 2.5V6.5Z" fill="#444"/></svg>
<svg class="a" style="left:242px;top:443.5px" width="5" height="8" viewBox="0 0 5 8"><path d="M4.5 0.5V7.5L0.5 4Z" fill="#aaa"/></svg>
<svg class="a" style="left:1124px;top:443.5px" width="5" height="8" viewBox="0 0 5 8"><path d="M0.5 0.5V7.5L4.5 4Z" fill="#aaa"/></svg>
<div class="a" style="left:1136px;top:439.5px;width:16px;height:15.5px;background:#ececf1;"></div>
<div class="a" style="left:219px;top:455px;width:933px;height:12px;background:#ececf1;"></div>
<div class="a grip" style="left:675px;top:459px;width:18px;height:5px"></div>
<div class="a" style="left:218px;top:466px;width:934px;height:1px;background:#d6d6e0;"></div>
<div class="a" style="left:218px;top:467px;width:934px;height:325px;background:#ececf1;"></div>
<svg class="a" style="left:226px;top:473px" width="15" height="15" viewBox="0 0 15 15"><circle cx="3" cy="2.8" r="2.6" fill="#1f6fd0"/><rect x="2.5" y="6.5" width="12" height="7.5" fill="#fff" stroke="#333" stroke-width="1.3"/><rect x="4.5" y="8.5" width="8" height="3.5" fill="#555"/></svg>
<svg class="a" style="left:250px;top:474px" width="14" height="14" viewBox="0 0 14 14"><path d="M1.5 1.5L12.5 12.5M12.5 1.5L1.5 12.5" stroke="#c43a30" stroke-width="1.7"/></svg>
<svg class="a" style="left:277px;top:473px" width="13" height="15" viewBox="0 0 13 15"><path d="M0.5 1.5L5 6M5 1.5L0.5 6" stroke="#c8302a" stroke-width="1.4"/><path d="M7 2.5H12.5M7 5.5H12.5M0.5 9H12.5M0.5 12.5H12.5" stroke="#333" stroke-width="1.5"/></svg>
<div class="a" style="left:298px;top:471px;width:1px;height:19px;background:#d6d6e0;"></div>
<svg class="a" style="left:309px;top:472px" width="15" height="16" viewBox="0 0 15 16"><path d="M1 4L3.5 1" stroke="#1f6fd0" stroke-width="1.6"/><rect x="5" y="1" width="9" height="6" fill="#333"/><rect x="0.5" y="8" width="8" height="7" fill="#333"/><path d="M9.5 12.5L11 14L14 10" stroke="#1f6fd0" stroke-width="1.6" fill="none"/></svg>
<svg class="a" style="left:327px;top:478px" width="6" height="4" viewBox="0 0 6 4"><path d="M0 0H6L3 3Z" fill="#333"/></svg>
<div class="a" style="left:218px;top:494px;width:220px;height:268px;background:#ffffff;"></div>
<div class="a" style="left:437.5px;top:494px;width:1.0px;height:268px;background:#dcdce6;"></div>
<div class="a" style="left:288px;top:529.4px;width:149.5px;height:17.300000000000068px;background:#dfebf7;"></div>
<svg class="a" style="left:224.8px;top:501.0px" width="7" height="7" viewBox="0 0 7 7"><path d="M6.5 0.5V6.5H0.5Z" fill="#505050"/></svg>
<svg class="a" style="left:237px;top:496px" width="15" height="15" viewBox="0 0 15 15"><rect x="3.5" y="0.5" width="11" height="10" fill="#999" stroke="#666"/><rect x="0.5" y="3.5" width="11" height="11" fill="#c8c8c8" stroke="#555" stroke-width="1.2"/><rect x="2.5" y="6" width="7" height="6" fill="#444"/><path d="M3 11L5 8.5L7 10L9 7.5" stroke="#ddd" stroke-width="0.8" fill="none"/></svg>
<div class="a t" style="top:498.75px;font-size:10.32px;line-height:10.32px;color:#33333a;left:256.3px;">Query Profiler</div>
<svg class="a" style="left:241.0px;top:518.0px" width="7" height="7" viewBox="0 0 7 7"><path d="M6.5 0.5V6.5H0.5Z" fill="#505050"/></svg>
<svg class="a" style="left:254px;top:513px" width="14" height="15" viewBox="0 0 14 15"><rect x="4.5" y="0.5" width="8.5" height="12" fill="#fff" stroke="#444" stroke-width="1.2"/><path d="M6.5 4H11" stroke="#444"/><rect x="0.5" y="9" width="5" height="5" fill="#444"/></svg>
<div class="a t" style="top:515.84px;font-size:10.55px;line-height:10.55px;color:#33333a;left:273.6px;">9:25:17 PM 8/27/2022 (0.393s)</div>
<svg class="a" style="left:273.5px;top:531px" width="13" height="14" viewBox="0 0 13 14"><rect x="0.5" y="0.5" width="11" height="9.5" fill="#aaa" stroke="#555"/><rect x="2.5" y="2.5" width="7" height="5" fill="#555"/><ellipse cx="9.5" cy="11" rx="2.6" ry="2.3" fill="#222"/></svg>
<div class="a t" style="top:533.21px;font-size:10.2px;line-height:10.2px;color:#33333a;left:290.8px;">Profile</div>
<svg class="a" style="left:273px;top:547px" width="13" height="14" viewBox="0 0 13 14"><rect x="0.5" y="0.5" width="4.5" height="4.5" fill="none" stroke="#555"/><rect x="8" y="0.5" width="4.5" height="4.5" rx="2" fill="none" stroke="#555"/><path d="M5 2.8H8M2.8 5V8" stroke="#555"/><rect x="0.5" y="8.5" width="4.5" height="4.5" rx="2" fill="none" stroke="#555"/></svg>
<div class="a t" style="top:550.51px;font-size:10.2px;line-height:10.2px;color:#33333a;left:290.8px;">Plan</div>
<svg class="a" style="left:274px;top:565px" width="13" height="12" viewBox="0 0 13 12"><ellipse cx="9" cy="3.5" rx="3.5" ry="2.5" fill="#333"/><ellipse cx="4" cy="8.5" rx="3.5" ry="2.5" fill="#333"/><path d="M4 8.5L9 3.5" stroke="#333" stroke-width="1.5"/></svg>
<div class="a t" style="top:567.71px;font-size:10.2px;line-height:10.2px;color:#33333a;left:290.8px;">Session statistics</div>
<svg class="a" style="left:442px;top:610px" width="4" height="7" viewBox="0 0 4 7"><path d="M3.5 0.5V6.5L0.5 3.5Z" fill="#777"/></svg>
<div class="a t" style="top:474.06px;font-size:10.93px;line-height:10.93px;color:#33333a;left:456.5px;">Change of STATUS VARIABLES due to the query execution - 9:25:17 PM 8/27/2022 (0.393s)</div>
<svg class="a" style="left:1073px;top:473px" width="14" height="14" viewBox="0 0 14 14"><path d="M4 1.5H13V3.5H11.5V11" stroke="#222" stroke-width="1.4" fill="none"/><rect x="4" y="1.5" width="7" height="9.5" fill="none" stroke="#222" stroke-width="1.4"/><path d="M1 12H10.5" stroke="#222" stroke-width="2"/><path d="M4 10.5Q1 10.5 1 12.5" stroke="#222" stroke-width="1.3" fill="none"/></svg>
<div class="a t" style="top:474.12px;font-size:10.8px;line-height:10.8px;color:#33333a;left:1091.2px;">SQL Query</div>
<div class="a" style="left:451px;top:494px;width:685px;height:239px;background:#ffffff;"></div>
<div class="a" style="left:450.5px;top:494px;width:1.0px;height:268px;background:#d6d6e2;"></div>
<div class="a" style="left:1136px;top:494px;width:15.5px;height:239px;background:#e6e6ea;"></div>
<div class="a" style="left:1136px;top:494px;width:14.5px;height:19px;background:#ffffff;"></div>
<div class="a" style="left:451px;top:513px;width:203px;height:18.5px;background:#dfebf7;"></div>
<div class="a t" style="top:498.76px;font-size:10.3px;line-height:10.3px;color:#33333a;left:455px;">State</div>
<div class="a t" style="top:498.82px;font-size:10.16px;line-height:10.16px;color:#33333a;left:658.8px;">Summed Duration, sec.</div>
<svg class="a" style="left:847px;top:502px" width="8" height="4" viewBox="0 0 8 4"><path d="M0 0H8L4 4Z" fill="#555"/></svg>
<div class="a t" style="top:498.51px;font-size:10.82px;line-height:10.82px;color:#33333a;left:862.0px;">Percentage, %</div>
<div class="a" style="left:654px;top:494px;width:1px;height:239px;background:#dcdce8;"></div>
<div class="a" style="left:859px;top:494px;width:1px;height:239px;background:#dcdce8;"></div>
<div class="a" style="left:1135.4px;top:494px;width:1.0px;height:239px;background:#dcdce8;"></div>
<div class="a" style="left:451px;top:512.5px;width:685px;height:1.0px;background:#d4d4e2;"></div>
<div class="a" style="left:451px;top:530.8px;width:685px;height:1.0px;background:#dcdce8;"></div>
<div class="a t" style="top:518.31px;font-size:10.3px;line-height:10.3px;color:#33333a;left:455px;">executing</div>
<div class="a t" style="top:518.31px;font-size:10.3px;line-height:10.3px;color:#33333a;right:304.5px;text-align:right;">0.391882</div>
<div class="a t" style="top:518.31px;font-size:10.3px;line-height:10.3px;color:#33333a;right:28.200000000000045px;text-align:right;">99.80</div>
<div class="a" style="left:451px;top:549.0999999999999px;width:685px;height:1.0px;background:#dcdce8;"></div>
<div class="a t" style="top:536.61px;font-size:10.3px;line-height:10.3px;color:#33333a;left:455px;">Opening tables</div>
<div class="a t" style="top:536.61px;font-size:10.3px;line-height:10.3px;color:#33333a;right:304.5px;text-align:right;">0.000537</div>
<div class="a t" style="top:536.61px;font-size:10.3px;line-height:10.3px;color:#33333a;right:28.200000000000045px;text-align:right;">0.14</div>
<div class="a" style="left:451px;top:567.4px;width:685px;height:1.0px;background:#dcdce8;"></div>
<div class="a t" style="top:554.91px;font-size:10.3px;line-height:10.3px;color:#33333a;left:455px;">starting</div>
<div class="a t" style="top:554.91px;font-size:10.3px;line-height:10.3px;color:#33333a;right:304.5px;text-align:right;">0.000102</div>
<div class="a t" style="top:554.91px;font-size:10.3px;line-height:10.3px;color:#33333a;right:28.200000000000045px;text-align:right;">0.03</div>
<div class="a" style="left:451px;top:585.6999999999999px;width:685px;height:1.0px;background:#dcdce8;"></div>
<div class="a t" style="top:573.21px;font-size:10.3px;line-height:10.3px;color:#33333a;left:455px;">statistics</div>
<div class="a t" style="top:573.21px;font-size:10.3px;line-height:10.3px;color:#33333a;right:304.5px;text-align:right;">0.000042</div>
<div class="a t" style="top:573.21px;font-size:10.3px;line-height:10.3px;color:#33333a;right:28.200000000000045px;text-align:right;">0.01</div>
<div class="a" style="left:451px;top:604.0px;width:685px;height:1.0px;background:#dcdce8;"></div>
<div class="a t" style="top:591.51px;font-size:10.3px;line-height:10.3px;color:#33333a;left:455px;">freeing items</div>
<div class="a t" style="top:591.51px;font-size:10.3px;line-height:10.3px;color:#33333a;right:304.5px;text-align:right;">0.000021</div>
<div class="a t" style="top:591.51px;font-size:10.3px;line-height:10.3px;color:#33333a;right:28.200000000000045px;text-align:right;">0.01</div>
<div class="a" style="left:451px;top:622.3px;width:685px;height:1.0px;background:#dcdce8;"></div>
<div class="a t" style="top:609.81px;font-size:10.3px;line-height:10.3px;color:#33333a;left:455px;">preparing</div>
<div class="a t" style="top:609.81px;font-size:10.3px;line-height:10.3px;color:#33333a;right:304.5px;text-align:right;">0.000018</div>
<div class="a t" style="top:609.81px;font-size:10.3px;line-height:10.3px;color:#33333a;right:28.200000000000045px;text-align:right;">0.00</div>
<div class="a" style="left:451px;top:640.5999999999999px;width:685px;height:1.0px;background:#dcdce8;"></div>
<div class="a t" style="top:628.11px;font-size:10.3px;line-height:10.3px;color:#33333a;left:455px;">end</div>
<div class="a t" style="top:628.11px;font-size:10.3px;line-height:10.3px;color:#33333a;right:304.5px;text-align:right;">0.000012</div>
<div class="a t" style="top:628.11px;font-size:10.3px;line-height:10.3px;color:#33333a;right:28.200000000000045px;text-align:right;">0.00</div>
<div class="a" style="left:451px;top:658.9px;width:685px;height:1.0px;background:#dcdce8;"></div>
<div class="a t" style="top:646.41px;font-size:10.3px;line-height:10.3px;color:#33333a;left:455px;">cleaning up</div>
<div class="a t" style="top:646.41px;font-size:10.3px;line-height:10.3px;color:#33333a;right:304.5px;text-align:right;">0.000011</div>
<div class="a t" style="top:646.41px;font-size:10.3px;line-height:10.3px;color:#33333a;right:28.200000000000045px;text-align:right;">0.00</div>
<div class="a" style="left:451px;top:677.1999999999999px;width:685px;height:1.0px;background:#dcdce8;"></div>
<div class="a t" style="top:664.71px;font-size:10.3px;line-height:10.3px;color:#33333a;left:455px;">closing tables</div>
<div class="a t" style="top:664.71px;font-size:10.3px;line-height:10.3px;color:#33333a;right:304.5px;text-align:right;">0.000011</div>
<div class="a t" style="top:664.71px;font-size:10.3px;line-height:10.3px;color:#33333a;right:28.200000000000045px;text-align:right;">0.00</div>
<div class="a" style="left:451px;top:695.5px;width:685px;height:1.0px;background:#dcdce8;"></div>
<div class="a t" style="top:683.01px;font-size:10.3px;line-height:10.3px;color:#33333a;left:455px;">checking permissions</div>
<div class="a t" style="top:683.01px;font-size:10.3px;line-height:10.3px;color:#33333a;right:304.5px;text-align:right;">0.000011</div>
<div class="a t" style="top:683.01px;font-size:10.3px;line-height:10.3px;color:#33333a;right:28.200000000000045px;text-align:right;">0.00</div>
<div class="a" style="left:451px;top:713.8px;width:685px;height:1.0px;background:#dcdce8;"></div>
<div class="a t" style="top:701.31px;font-size:10.3px;line-height:10.3px;color:#33333a;left:455px;">optimizing</div>
<div class="a t" style="top:701.31px;font-size:10.3px;line-height:10.3px;color:#33333a;right:304.5px;text-align:right;">0.000009</div>
<div class="a t" style="top:701.31px;font-size:10.3px;line-height:10.3px;color:#33333a;right:28.200000000000045px;text-align:right;">0.00</div>
<div class="a" style="left:451px;top:732.0999999999999px;width:685px;height:1.0px;background:#dcdce8;"></div>
<div class="a t" style="top:719.61px;font-size:10.3px;line-height:10.3px;color:#33333a;left:455px;">waiting for handler commit</div>
<div class="a t" style="top:719.61px;font-size:10.3px;line-height:10.3px;color:#33333a;right:304.5px;text-align:right;">0.000008</div>
<div class="a t" style="top:719.61px;font-size:10.3px;line-height:10.3px;color:#33333a;right:28.200000000000045px;text-align:right;">0.00</div>
<svg class="a" style="left:1139.5px;top:519.5px" width="8" height="5" viewBox="0 0 8 5"><path d="M0.5 4.5H7.5L4 1Z" fill="#9a9a9a"/></svg>
<div class="a" style="left:1139.5px;top:530px;width:8.0px;height:130.29999999999995px;background:#c2c3c9;"></div>
<svg class="a" style="left:1139.5px;top:723px" width="8" height="5" viewBox="0 0 8 5"><path d="M0.5 0.5H7.5L4 4Z" fill="#9a9a9a"/></svg>
<div class="a" style="left:451.5px;top:733px;width:700.5px;height:29px;background:#ececf1;"></div>
<div class="a" style="left:453.3px;top:737px;width:200.7px;height:22.5px;background:#ebebef;box-sizing:border-box;border:1px solid #d4d4de;"></div>
<div class="a" style="left:657px;top:737px;width:201.5px;height:22.5px;background:#ebebef;box-sizing:border-box;border:1px solid #d4d4de;"></div>
<div class="a" style="left:861.5px;top:737px;width:272.5px;height:22.5px;background:#ebebef;box-sizing:border-box;border:1px solid #d4d4de;"></div>
<div class="a" style="left:217px;top:762px;width:935px;height:1px;background:#dcdce4;"></div>
<div class="a t" style="top:744.16px;font-size:10.3px;line-height:10.3px;color:#33333a;right:511.70000000000005px;text-align:right;">Sum</div>
<div class="a t" style="top:744.16px;font-size:10.3px;line-height:10.3px;color:#33333a;right:307.6px;text-align:right;">0.392682</div>
<div class="a t" style="top:744.16px;font-size:10.3px;line-height:10.3px;color:#33333a;right:31px;text-align:right;">100</div>
<div class="a" style="left:220.6px;top:765.7px;width:53.400000000000006px;height:22.899999999999977px;background:#f4f4f8;box-sizing:border-box;border:1px solid #5a9ad8;"></div>
<svg class="a" style="left:225px;top:770px" width="14" height="14" viewBox="0 0 14 14"><path d="M4 1.5H13V3.5H11.5V11" stroke="#222" stroke-width="1.4" fill="none"/><rect x="4" y="1.5" width="7" height="9.5" fill="none" stroke="#222" stroke-width="1.4"/><path d="M1 12H10.5" stroke="#222" stroke-width="2"/><path d="M4 10.5Q1 10.5 1 12.5" stroke="#222" stroke-width="1.3" fill="none"/></svg>
<div class="a t" style="top:771.68px;font-size:12.17px;line-height:12.17px;color:#3a3a40;font-weight:bold;left:244.7px;-webkit-text-stroke:0;">Text</div>
<svg class="a" style="left:287.5px;top:771px" width="12" height="12" viewBox="0 0 12 12"><path d="M1 4.2H10M2 8.6H10.8" stroke="#2a2a2a" stroke-width="1.5"/><path d="M1.2 4.2L4.2 1.5" stroke="#2a2a2a" stroke-width="1.5"/><path d="M10.8 8.6L7.8 11.2" stroke="#2a2a2a" stroke-width="1.5"/></svg>
<svg class="a" style="left:312.3px;top:771.6px" width="12" height="12" viewBox="0 0 12 12"><rect x="0.6" y="0.6" width="10.8" height="10.8" fill="#f4f4f4" stroke="#444" stroke-width="1.2"/><path d="M0.5 4.3H11.5M0.5 7.8H11.5M4.2 0.5V11.5M7.8 0.5V11.5" stroke="#666" stroke-width="0.9"/></svg>
<div class="a t" style="top:772.42px;font-size:10.59px;line-height:10.59px;color:#33333a;left:330.0px;">Data</div>
<div class="a" style="left:363.5px;top:767px;width:1.0px;height:21px;background:#d6d6e0;"></div>
<svg class="a" style="left:374.5px;top:772px" width="11" height="11" viewBox="0 0 11 11"><path d="M5.5 0.5V10.5M0.5 5.5H10.5" stroke="#2a2a2a" stroke-width="1.4"/></svg>
<div class="a" style="left:545.5px;top:767px;width:1.0px;height:21px;background:#d6d6e0;"></div>
<div class="a" style="left:558.2px;top:773.5px;width:7.599999999999909px;height:7.5px;background:#3cc43c;"></div>
<div class="a t" style="top:772.00px;font-size:11.48px;line-height:11.48px;color:#33333a;left:572.4px;">Development</div>
<div class="a" style="left:649px;top:767px;width:1px;height:21px;background:#d6d6e0;"></div>
<svg class="a" style="left:658px;top:770.5px" width="14" height="14" viewBox="0 0 14 14"><circle cx="7" cy="7" r="6.6" fill="#2c9a3a"/><path d="M3.6 7.2L6 9.6L10.4 4.6" stroke="#fff" stroke-width="1.8" fill="none"/></svg>
<div class="a t" style="top:772.14px;font-size:11.2px;line-height:11.2px;color:#33333a;left:677.2px;">Query executed successfully.</div>
<div class="a" style="left:830.3px;top:767px;width:1.0px;height:21px;background:#d6d6e0;"></div>
<div class="a t" style="top:772.54px;font-size:10.33px;line-height:10.33px;color:#33333a;left:837.8px;">0:00:00.090</div>
<div class="a" style="left:900.7px;top:767px;width:1.0px;height:21px;background:#d6d6e0;"></div>
<div class="a t" style="top:772.35px;font-size:10.74px;line-height:10.74px;color:#33333a;left:907.6px;">JordanSanders (8.0)</div>
<div class="a" style="left:1013.8px;top:767px;width:1.0px;height:21px;background:#d6d6e0;"></div>
<div class="a t" style="top:772.42px;font-size:10.6px;line-height:10.6px;color:#33333a;left:1020.7px;">tw</div>
<div class="a" style="left:1042px;top:767px;width:1px;height:21px;background:#d6d6e0;"></div>
<div class="a t" style="top:772.51px;font-size:10.4px;line-height:10.4px;color:#33333a;left:1049.0px;">car_sale</div>
<div class="a" style="left:1096.5px;top:767px;width:1.0px;height:21px;background:#d6d6e0;"></div>
<div class="a" style="left:1100px;top:765.2px;width:24px;height:22.799999999999955px;background:#f4f4f8;box-sizing:border-box;border:1px solid #5a9ad8;"></div>
<svg class="a" style="left:1104px;top:770px" width="15" height="13" viewBox="0 0 15 13"><rect x="0.7" y="0.7" width="13.6" height="11.6" fill="#fff" stroke="#222" stroke-width="1.4"/><rect x="0.7" y="6.5" width="13.6" height="5.8" fill="#222"/></svg>
<div class="a" style="left:1131px;top:770.7px;width:13.299999999999955px;height:12.799999999999955px;background:#fff;box-sizing:border-box;border:1.3px solid #444;"></div>
<div class="a" style="left:5px;top:791.5px;width:1150px;height:1.5px;background:#d8d8de;"></div>
<div class="a" style="left:217px;top:762px;width:221.5px;height:1px;background:#e0e0e6;"></div>
<div class="a" style="left:5px;top:793.5px;width:1150px;height:27.5px;background:#1570c4;"></div>
<svg class="a" style="left:1144px;top:811px" width="9" height="9" viewBox="0 0 9 9"><path d="M8 1V8H1Z" fill="#4a8fd4"/></svg>
<div class="a t" style="top:802.09px;font-size:10.66px;line-height:10.66px;color:#dce9f8;left:950.3px;-webkit-text-stroke:0.1px #dce9f8;">Ln 16</div>
<div class="a t" style="top:802.08px;font-size:10.69px;line-height:10.69px;color:#dce9f8;left:989.0px;-webkit-text-stroke:0.1px #dce9f8;">Col 34</div>
<div class="a t" style="top:802.00px;font-size:10.86px;line-height:10.86px;color:#dce9f8;left:1031.7px;-webkit-text-stroke:0.1px #dce9f8;">Ch 34</div>
</body></html>
